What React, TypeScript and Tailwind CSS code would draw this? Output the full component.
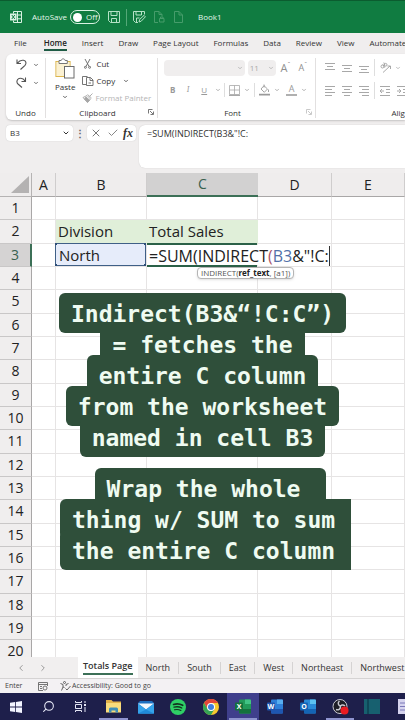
import type { ReactNode } from 'react';
import { ChevronDown, ChevronLeft, ChevronRight, Check, X, Search } from 'lucide-react';

const MENU = ['File', 'Home', 'Insert', 'Draw', 'Page Layout', 'Formulas', 'Data', 'Review', 'View', 'Automate'];
const COLUMNS = ['A', 'B', 'C', 'D', 'E'];
const ROWS = Array.from({ length: 20 }, (_, i) => i + 1);
const SHEETS = ['North', 'South', 'East', 'West', 'Northeast', 'Northwest'];

function Chevron({ label, className = '' }: { label: string; className?: string }) {
  return (
    <button aria-label={label} className={`shrink-0 ${className}`}>
      <ChevronDown size={6} strokeWidth={3} />
    </button>
  );
}

/* ---------- title bar ---------- */

function TitleBar() {
  return (
    <header className="flex h-[33px] shrink-0 items-center border-t border-[#0b5c2f] bg-[#107c41] pl-[10px] text-[8px] text-[#e3f6ea]">
      <svg width="12" height="12" viewBox="0 0 12 12" fill="none" stroke="#d9f2e2" strokeWidth="1">
        <path d="M3.5 2.5v-2h8v11h-8v-2M7.5.5v11M7 4h4.5M7 7.8h4.5" />
        <rect x="0" y="2.5" width="6.6" height="7" fill="#d9f2e2" stroke="none" />
        <path d="M1.8 4l3 4M4.8 4l-3 4" stroke="#107c41" />
      </svg>
      <span className="ml-[10px] w-[38px]">AutoSave</span>
      <button className="flex h-[14px] w-[30px] items-center gap-1 rounded-full border border-[#d9f2e2] pl-[2px]">
        <span className="h-[9px] w-[9px] rounded-full bg-white" />
        Off
      </button>
      <button aria-label="Save" className="ml-[8px]">
        <svg width="12" height="12" viewBox="0 0 12 12" fill="none" stroke="#b5e2c6">
          <path d="M.5.5h11v11h-9l-2-2zM3 .5v4h6v-4M3.5 11.5v-4h5v4" />
        </svg>
      </button>
      <span className="mx-[6px] h-[17px] w-px bg-[#54a878]" />
      <button aria-label="Save as">
        <svg width="13" height="12" viewBox="0 0 13 12" fill="none" stroke="#b5e2c6">
          <path d="M5 11.5H2.500l-2-2v-9h11v3M3 .5v3.500h5.500v-3.500M3.500 11V7h3M6 11l.7-2.600 4.300-4 1.400 1.400-4.200 4.400z" />
        </svg>
      </button>
      <button aria-label="Protect" className="ml-[8px]">
        <svg width="11" height="12" viewBox="0 0 11 12" fill="none" stroke="#469c6b">
          <path d="M4 11.500H.5V.5H5l3 3V5M5 .5v3h3M5.500 7.500h4.500v3.500H5.500zM6.500 7.500V6h2.500v1.500" />
        </svg>
      </button>
      <button aria-label="New" className="ml-[9px]">
        <svg width="9" height="12" viewBox="0 0 9 12" fill="none" stroke="#469c6b">
          <path d="M.5.5H5l3.500 3.500v7.500h-8zM5 .5V4h3.500" />
        </svg>
      </button>
      <span className="ml-[15px]">Book1</span>
    </header>
  );
}

function MenuTabs() {
  return (
    <nav className="flex h-[21px] shrink-0 items-center gap-[15px] overflow-hidden pl-[14px] text-[8px] whitespace-nowrap text-[#333]">
      {MENU.map(name => (
        <button
          key={name}
          className={
            name === 'Home'
              ? 'ml-[2px] border-b-2 border-[#1e5b45] font-semibold text-[#222]'
              : 'border-b-2 border-transparent'
          }
        >
          {name}
        </button>
      ))}
    </nav>
  );
}

/* ---------- ribbon ---------- */

function Group({ label, className, children }: { label: string; className: string; children: ReactNode }) {
  return (
    <section className={`relative flex shrink-0 flex-col border-r border-[#e2e0e0] ${className}`}>
      <div className="h-[50px]">{children}</div>
      <h2 className="text-center text-[8px] leading-[10px] text-[#333]">{label}</h2>
    </section>
  );
}

function Launcher({ color }: { color: string }) {
  return (
    <button aria-label="More settings" className="absolute right-[3px] bottom-[3px]">
      <svg width="6" height="6" viewBox="0 0 6 6" fill="none" stroke={color} strokeWidth=".8">
        <path d="M.5 4.500v-4h4M2 2l3 3M5.500 2.500v3h-3" />
      </svg>
    </button>
  );
}

function Lines({ d, label }: { d: string; label: string }) {
  return (
    <button aria-label={label}>
      <svg width="10" height="11" viewBox="0 0 10 11" fill="none" stroke="#a8a8a8">
        <path d={d} />
      </svg>
    </button>
  );
}

function Ribbon() {
  return (
    <div className="ml-[6px] flex h-[66px] shrink-0 overflow-hidden rounded-l-md bg-white pt-[4px] pb-[2px] shadow-[0_1px_2px_#c4c2c2]">
      <Group label="Undo" className="w-[40px]">
        <div className="flex flex-col gap-[7px] pt-[1px] pl-[10px] text-[#444]">
          <div className="flex items-center gap-[6px]">
            <button aria-label="Undo">
              <svg width="11" height="11" viewBox="0 0 11 11" fill="none" stroke="#555" strokeWidth="1.100">
                <path d="M1 .5v4h4M1.200 4.300C3 2 5 .8 7.500 1.300c2.500.6 3.300 3 1.500 5L4.500 10.500" />
              </svg>
            </button>
            <Chevron label="Undo list" />
          </div>
          <div className="flex items-center gap-[6px]">
            <button aria-label="Redo">
              <svg width="11" height="11" viewBox="0 0 11 11" fill="none" stroke="#555" strokeWidth="1.100">
                <path d="M9.500.5v4h-4M9.300 4.300C7.500 1.500 5 .8 3 1.600.5 2.700.4 5.500 2 7l4 3.500" />
              </svg>
            </button>
            <Chevron label="Redo list" />
          </div>
        </div>
      </Group>

      <Group label="Clipboard" className="w-[112px] pr-[8px]">
        <div className="flex gap-[7px] pl-[9px] text-[8px] leading-[10px] text-[#333]">
          <button className="flex w-[24px] flex-col items-center">
            <svg width="20" height="21" viewBox="0 0 20 21" fill="none">
              <path d="M1 3.500h14v5M1 3v15.500h9" stroke="#dcb64e" strokeWidth="1.200" />
              <path d="M1.600 4h12.800v5H9.500v9H1.600z" fill="#fbf1d2" />
              <path d="M4 5.500v-3h2.200C6.500.3 9.800.3 10.100 2.500h2.200v3z" fill="#fff" stroke="#777" />
              <rect x="9.500" y="8.500" width="9.500" height="11.500" fill="#fff" stroke="#6b6b6b" />
            </svg>
            <span className="pt-[3px]">Paste</span>
            <ChevronDown size={6} strokeWidth={3} className="mt-[2px]" />
          </button>
          <div className="flex flex-col gap-[7px] pt-px whitespace-nowrap">
            <button className="flex items-center gap-[5px] pl-[2px]">
              <svg width="7" height="10" viewBox="0 0 7 10" fill="none" stroke="#666" strokeWidth=".9">
                <path d="M1 0l4 7.500M6 0L2 7.500" />
                <circle cx="1.400" cy="8.300" r="1" />
                <circle cx="5.600" cy="8.300" r="1" />
              </svg>
              Cut
            </button>
            <div className="flex items-center gap-[8px]">
              <button className="flex items-center gap-[2px]">
                <svg width="12" height="10" viewBox="0 0 12 10" fill="none" stroke="#666" strokeWidth=".9">
                  <path d="M4 8.500H.5v-8h5M4.500 1.500h4l2.500 2.500v5.500H4.500zM8 1.500v3h3M6.500 7h2.500" />
                </svg>
                Copy
              </button>
              <Chevron label="Copy list" />
            </div>
            <button disabled className="flex items-center gap-[2px] text-[#b5b5b5]">
              <svg width="11" height="10" viewBox="0 0 11 10" fill="none" stroke="#a5a5a5" strokeWidth=".9">
                <path d="M10.500.5L7.500 3.500M5.500 1.500l4 3.500M5 2.500L1 4.500l4.500 5 3-3.500z" />
                <path d="M2.500 6l3 3.300 2-2.300L4 4z" fill="#a5a5a5" />
              </svg>
              Format Painter
            </button>
          </div>
        </div>
        <Launcher color="#555" />
      </Group>

      <Group label="Font" className="w-[158px] pr-[8px]">
        <div className="flex h-[19px] items-center pl-[6px] text-[#aaa]">
          <div className="mt-px flex h-[16px] w-[81px] items-center justify-end rounded-sm bg-[#f0eeee] pr-[2px]">
            <Chevron label="Font name" />
          </div>
          <div className="mt-px ml-[3px] flex h-[16px] w-[28px] items-center justify-between rounded-sm bg-[#f0eeee] px-[2px] text-[8px]">
            11
            <Chevron label="Font size" />
          </div>
          <button className="ml-[5px] flex text-[11px] leading-[14px] text-[#8f8f8f]">
            A<span className="text-[7px] leading-[7px]">ˆ</span>
          </button>
          <button className="ml-[8px] flex text-[9px] leading-[14px] text-[#8f8f8f]">
            A<span className="text-[7px] leading-[7px]">ˇ</span>
          </button>
        </div>
        <div className="mt-[6px] flex h-[14px] items-center pl-[12px] text-[8px] text-[#999]">
          <button className="w-[17px] text-left font-bold">B</button>
          <button className="w-[15px] text-left font-serif italic">I</button>
          <button className="w-[14px] text-left underline">U</button>
          <Chevron label="Underline style" className="w-[9px]" />
          <span className="h-[14px] w-px bg-[#dedede]" />
          <button aria-label="Borders" className="ml-[4px] w-[15px]">
            <svg width="11" height="11" viewBox="0 0 11 11" fill="none" stroke="#a8a8a8" strokeWidth=".8">
              <path d="M.5.500h10v9H.5zM5.500.5v9M.5 5h10" />
              <path d="M0 10.300h11" strokeWidth="1.300" />
            </svg>
          </button>
          <Chevron label="Border style" className="w-[10px]" />
          <span className="h-[14px] w-px bg-[#dedede]" />
          <button aria-label="Fill color" className="ml-[4px] w-[16px]">
            <svg width="11" height="12" viewBox="0 0 11 12" fill="none" stroke="#9a9a9a" strokeWidth=".9">
              <path d="M5 .5v3M2 5l3-3.300L8.500 5 5.300 8.300zM9.500 5.500v2.500" />
              <path d="M0 10.700h11" strokeWidth="1.800" />
            </svg>
          </button>
          <Chevron label="Fill colors" className="w-[12px]" />
          <button className="w-[11px] border-b-2 border-[#b0b0b0] text-center text-[9px] leading-[10px]">A</button>
          <Chevron label="Font colors" className="ml-[4px]" />
        </div>
        <Launcher color="#bbb" />
      </Group>

      <Group label="Alignment" className="w-[190px]">
        <div className="flex h-[19px] items-center gap-[7px] pl-[9px] text-[#aaa]">
          <Lines label="Top align" d="M0 1.500h10M2 4.500h6M0 7.500h10" />
          <Lines label="Middle align" d="M0 3.500h10M2 6.500h6M0 9.500h10" />
          <Lines label="Bottom align" d="M0 4.500h10M2 7.500h6M0 10.500h10" />
          <span className="-mx-[2px] h-[17px] w-px bg-[#dedede]" />
          <button aria-label="Orientation">
            <svg width="12" height="11" viewBox="0 0 12 11" fill="none" stroke="#a0a0a0" strokeWidth=".9">
              <path d="M3 10.500l7-6.500M7.500 4h3v3" />
              <circle cx="2.500" cy="4.500" r="1.500" />
              <circle cx="5.600" cy="2.800" r="1.400" />
              <path d="M2.800 2.500l2 3.200M3.800.5L5 3.500" />
            </svg>
          </button>
          <Chevron label="Orientation list" className="-ml-[4px]" />
        </div>
        <div className="mt-[6px] flex h-[14px] items-center gap-[7px] pl-[9px]">
          <Lines label="Align left" d="M0 1.500h10M0 4.500h7M0 7.500h10M0 10.500h7" />
          <Lines label="Center" d="M0 1.500h10M2 4.500h6M0 7.500h10M2 10.500h6" />
          <Lines label="Align right" d="M0 1.500h10M3 4.500h7M0 7.500h10M3 10.500h7" />
          <span className="-mx-[2px] h-[17px] w-px bg-[#dedede]" />
          <Lines label="Decrease indent" d="M0 1.500h10M6 4.500h4M6 7.500h4M0 10.500h10M0 6h4M2 4L0 6l2 2" />
          <Lines label="Increase indent" d="M0 1.500h10M6 4.500h4M6 7.500h4M0 10.500h10M0 6h4M2 4l2 2-2 2" />
        </div>
      </Group>
    </div>
  );
}

/* ---------- formula bar ---------- */

function FormulaBar() {
  return (
    <div className="mt-[5px] flex h-[43px] shrink-0 items-start pl-[6px] text-[8px] text-[#333]">
      <div className="flex h-[16px] w-[67px] items-center rounded-sm bg-white pr-[3px] pl-[4px] shadow-[0_0_1px_#bbb]">
        <input aria-label="Name box" defaultValue="B3" className="min-w-0 flex-1 outline-none" />
        <button aria-label="Names">
          <ChevronDown size={8} strokeWidth={3} />
        </button>
      </div>
      <span className="w-[14px] text-center text-[10px] leading-[16px] font-bold text-[#666]">⋮</span>
      <div className="flex h-[16px] w-[49px] items-center justify-between rounded-sm bg-white px-[3px] shadow-[0_0_1px_#bbb]">
        <button aria-label="Cancel"><X size={12} strokeWidth={2} className="text-[#777]" /></button>
        <button aria-label="Enter"><Check size={12} strokeWidth={2} className="text-[#888]" /></button>
        <button className="font-['Liberation_Serif',serif] text-[12px] leading-[14px] font-bold italic">fx</button>
      </div>
      <textarea
        aria-label="Formula"
        defaultValue={'=SUM(INDIRECT(B3&"!C:'}
        className="ml-[3px] h-full flex-1 resize-none rounded-l-md bg-white px-[8px] pt-[3px] text-[9px] leading-[12px] shadow-[0_0_1px_#bbb] outline-none"
      />
    </div>
  );
}

/* ---------- worksheet ---------- */

function cellContent(row: number, col: string) {
  if (row === 2 && col === 'B') return 'Division';
  if (row === 2 && col === 'C') return 'Total Sales';
  if (row === 3 && col === 'B') {
    return (
      <div className="absolute -top-px -left-px right-0 bottom-0 border border-[#3f5f86] bg-[#e6ecfa] pl-[3px]">
        North
        <i className="absolute -top-[1px] -left-[1px] h-[2px] w-[2px] bg-[#2f4f78]" />
        <i className="absolute -top-[1px] -right-[1px] h-[2px] w-[2px] bg-[#2f4f78]" />
        <i className="absolute -bottom-[1px] -left-[1px] h-[2px] w-[2px] bg-[#2f4f78]" />
        <i className="absolute -right-[1px] -bottom-[1px] h-[2px] w-[2px] bg-[#2f4f78]" />
      </div>
    );
  }
  if (row === 3 && col === 'C') {
    return (
      <>
        <div className="absolute -top-px -bottom-px left-0 w-full border-y-2 border-[#2b6148]" />
        <div className="absolute top-px bottom-px left-0 z-10 flex items-center bg-white pt-px pl-[2px] text-[16px] whitespace-nowrap">
          =SUM(INDIRECT<span className="text-[#a8566a]">(</span>
          <span className="text-[#5270a8]">B3</span>&amp;"!C:
          <span className="h-[20px] w-px bg-[#333]" />
        </div>
        <div className="absolute top-full left-[50px] z-10 mt-px rounded-sm border border-[#b5b5b5] bg-white px-[3px] text-[8px] leading-[10px] whitespace-nowrap text-[#555] shadow-sm">
          INDIRECT(<b className="text-[#222]">ref_text</b>, [a1])
        </div>
      </>
    );
  }
  return null;
}

function Worksheet() {
  return (
    <table className="w-full table-fixed border-separate border-spacing-0 text-[15px] leading-[22px] text-[#222]">
      <colgroup>
        <col className="w-[32px]" />
        <col className="w-[24px]" />
        <col className="w-[91px]" />
        <col className="w-[111px]" />
        <col className="w-[74px]" />
        <col />
      </colgroup>
      <thead>
        <tr className="h-[24px] bg-[#efeded] text-[14px]">
          <th className="border-r border-b border-[#b5b3b3] p-0">
            <svg width="18" height="17" viewBox="0 0 18 17" className="mr-[2px] ml-auto">
              <path d="M18 0v17H0z" fill="#b4b2b2" />
            </svg>
          </th>
          {COLUMNS.map(col => (
            <th
              key={col}
              className={
                col === 'C'
                  ? 'border-b-2 border-[#3c7057] bg-[#d2d1d1] p-0 font-normal text-[#39614f]'
                  : 'border-r border-b border-r-[#cfcdcd] border-b-[#a9a7a7] p-0 font-normal'
              }
            >
              {col}
            </th>
          ))}
        </tr>
      </thead>
      <tbody className="align-top">
        {ROWS.map(row => (
          <tr key={row} className={row % 3 === 2 ? 'h-[24px]' : 'h-[23px]'}>
            <th
              className={
                row === 3
                  ? 'border-r-2 border-b border-r-[#3c7057] border-b-[#c9c7c7] bg-[#d5d3d3] p-0 text-[14px] font-normal text-[#39614f]'
                  : 'border-r border-b border-r-[#a9a7a7] border-b-[#c9c7c7] bg-[#f0eeee] p-0 text-[14px] font-normal'
              }
            >
              {row}
            </th>
            {COLUMNS.map(col => (
              <td
                key={col}
                className={
                  row === 2 && (col === 'B' || col === 'C')
                    ? 'relative border-b border-[#dcebd6] bg-[#e0efd9] py-0 pr-0 pl-[2px]'
                    : 'relative border-r border-b border-[#e6e4e4] bg-white p-0'
                }
              >
                {cellContent(row, col)}
              </td>
            ))}
          </tr>
        ))}
      </tbody>
    </table>
  );
}

/* ---------- captions over the sheet ---------- */

function Caption({ lines }: { lines: string[] }) {
  return (
    <div className="flex w-max flex-col items-center font-['DejaVu_Sans_Mono',monospace] text-[23px] leading-[38px] font-bold whitespace-pre text-[#effbf1]">
      {lines.map(line => (
        <p key={line} className="-mb-[9px] rounded-md bg-[#2f4f3a] px-[12px] pt-[2px]">
          <span className="relative z-10">{line}</span>
        </p>
      ))}
    </div>
  );
}

/* ---------- bottom bars ---------- */

function SheetTabs() {
  return (
    <div className="flex h-[22px] shrink-0 items-center overflow-hidden border-b border-[#d5d3d3] bg-[#f1efef] pl-[16px] text-[9px] whitespace-nowrap text-[#333]">
      <button aria-label="Previous sheet"><ChevronLeft size={10} className="text-[#888]" /></button>
      <button aria-label="Next sheet" className="ml-[12px]"><ChevronRight size={10} className="text-[#888]" /></button>
      <button className="ml-[30px] h-full bg-white px-[5px] pb-[2px] font-semibold">
        <span className="block border-b-2 border-[#3c7057] leading-[14px]">Totals Page</span>
      </button>
      {SHEETS.map(name => (
        <button key={name} className="border-r border-[#d5d3d3] px-[8px] leading-[12px]">{name}</button>
      ))}
    </div>
  );
}

function StatusBar() {
  return (
    <div className="flex h-[14px] shrink-0 items-center bg-[#f3f1f3] pl-[5px] text-[7px] text-[#444]">
      <span className="w-[33px]">Enter</span>
      <svg width="10" height="9" viewBox="0 0 10 9" fill="none" stroke="#666" strokeWidth=".9">
        <path d="M5 8.500H.5v-8h9V4M.5 2.500h9M2 4.500h2M2 6.500h2" />
        <circle cx="7" cy="6" r="2" />
      </svg>
      <svg width="11" height="10" viewBox="0 0 11 10" fill="none" stroke="#555" strokeWidth=".9" className="ml-[12px]">
        <circle cx="4.500" cy="1.500" r="1" />
        <path d="M.5 2.500l2.500 1v2.500L1.500 9.500M8.500 2.500L6 3.500V5M3 6l1.500.5M5.500 7.500l1.500 1.500L10.500 5" />
      </svg>
      <span className="ml-px">Accessibility: Good to go</span>
    </div>
  );
}

function OfficeIcon({ letter, dark, mid, light }: { letter: string; dark: string; mid: string; light: string }) {
  return (
    <svg width="16" height="15" viewBox="0 0 16 15">
      <rect x="4" y="0.500" width="12" height="14" rx="1" fill={mid} />
      <path d="M10 .5h5a1 1 0 0 1 1 1V5h-6z" fill={light} />
      <path d="M4 10h12v3.500a1 1 0 0 1-1 1H5a1 1 0 0 1-1-1z" fill={dark} />
      <rect x="0" y="3.500" width="8" height="8" rx="1" fill={dark} />
      <text x="4" y="10" textAnchor="middle" fontSize="7" fontWeight="700" fill="#fff">{letter}</text>
    </svg>
  );
}

function TaskButton({ label, className = '', running, children }: { label: string; className?: string; running?: boolean; children: ReactNode }) {
  return (
    <button aria-label={label} className={`relative flex h-full w-[8%] shrink-0 items-center justify-center ${className}`}>
      {children}
      {running && <i className="absolute inset-x-[2px] bottom-0 h-[2px] bg-[#8f94cf]" />}
    </button>
  );
}

function Taskbar() {
  return (
    <footer className="flex h-[27px] shrink-0 overflow-hidden bg-[#1e1f4b]">
      <TaskButton label="Start">
        <svg width="12" height="12" viewBox="0 0 12 12" fill="#f2f4ff">
          <path d="M0 1.700L5.200 1v4.600H0zM6 .9L12 0v5.600H6zM0 6.400h5.200V11L0 10.300zM6 6.400h6V12l-6-.9z" />
        </svg>
      </TaskButton>
      <TaskButton label="Search">
        <Search size={13} strokeWidth={2} className="-scale-x-100 text-[#e4e6f5]" />
      </TaskButton>
      <TaskButton label="Task view">
        <svg width="12" height="11" viewBox="0 0 12 11" fill="none" stroke="#e4e6f5">
          <path d="M.5 0v1.500h6V0M.5 3.500h6v4h-6zM.5 11V9.500h6V11M10 0v2M10 6v5" />
          <rect x="9" y="3" width="2" height="2" fill="#e4e6f5" stroke="none" />
        </svg>
      </TaskButton>
      <TaskButton label="File Explorer" running>
        <svg width="15" height="13" viewBox="0 0 15 13">
          <path d="M0 0h5.500l1.500 1.500h8V12H0z" fill="#e2b24a" />
          <path d="M0 3h15v9.500H0z" fill="#f8dc7c" />
          <path d="M3 12.500V9a1.500 1.500 0 0 1 1.500-1.500h6A1.500 1.500 0 0 1 12 9v3.500H9.500V10.500h-4v2z" fill="#3f8fb8" />
        </svg>
      </TaskButton>
      <TaskButton label="Mail">
        <svg width="16" height="15" viewBox="0 0 16 15">
          <path d="M0 4l2-2h12l2 2v10.500H0z" fill="#1d6fc0" />
          <path d="M0 4.500h16L8 10.500z" fill="#f2f7fc" />
          <path d="M0 4.500l8 6 8-6v10H0z" fill="#36a3ea" />
          <path d="M0 14.500l8-4 8 4z" fill="#2089d8" />
        </svg>
      </TaskButton>
      <TaskButton label="Spotify">
        <svg width="16" height="16" viewBox="0 0 16 16" fill="none" stroke="#12331f" strokeLinecap="round">
          <circle cx="8" cy="8" r="8" fill="#2fcf66" stroke="none" />
          <path d="M3.500 5.500c3-1 6.500-.7 9.200.8" strokeWidth="1.600" />
          <path d="M4 8.200c2.600-.8 5.400-.5 7.800.8" strokeWidth="1.300" />
          <path d="M4.500 10.800c2.200-.6 4.500-.4 6.400.7" strokeWidth="1.100" />
        </svg>
      </TaskButton>
      <TaskButton label="Chrome">
        <svg width="16" height="16" viewBox="0 0 16 16">
          <circle cx="8" cy="8" r="8" fill="#f7c92f" />
          <path d="M1.070 4A8 8 0 0 1 14.930 4H8L4.540 10z" fill="#e2463b" />
          <path d="M1.070 4A8 8 0 0 0 8 16l3.460-6H4.540z" fill="#36a456" />
          <circle cx="8" cy="8" r="4" fill="#fff" />
          <circle cx="8" cy="8" r="3" fill="#3f7fe0" />
        </svg>
      </TaskButton>
      <TaskButton label="Excel" running className="bg-[#3f3f8c]">
        <OfficeIcon letter="X" dark="#14713d" mid="#229a58" light="#41c383" />
      </TaskButton>
      <TaskButton label="Word">
        <OfficeIcon letter="W" dark="#1e56b0" mid="#2f7fd8" light="#58aef0" />
      </TaskButton>
      <TaskButton label="Outlook">
        <OfficeIcon letter="O" dark="#1464b4" mid="#2a8bd8" light="#5cc2f2" />
      </TaskButton>
      <TaskButton label="OBS" running>
        <svg width="17" height="16" viewBox="0 0 17 16">
          <circle cx="8" cy="7.500" r="7" fill="#1d1d26" stroke="#c9c9d2" />
          <path d="M7.500 2c-2 1.500-1.500 4.500 1 5M13 7c-2-2-4.500-1-5 1M4 10.500c2.500 1 4.500-.5 4.500-3" stroke="#c9c9d2" strokeWidth="1.500" fill="none" />
          <circle cx="12.500" cy="11.500" r="4" fill="#ea1b22" />
        </svg>
      </TaskButton>
      <TaskButton label="Library">
        <svg width="16" height="15" viewBox="0 0 16 15">
          <rect width="16" height="15" fill="#17606f" />
          <path d="M4 0v15" stroke="#0e3f50" strokeWidth="1.500" />
        </svg>
      </TaskButton>
      <TaskButton label="Notes">
        <svg width="13" height="15" viewBox="0 0 13 15">
          <rect width="13" height="15" fill="#d5d3ee" />
          <path d="M2 4h9M2 7.500h9M2 11h9" stroke="#7b78b8" />
        </svg>
      </TaskButton>
    </footer>
  );
}

export default function App() {
  return (
    <div className="flex h-screen flex-col overflow-hidden bg-[#f0eeee] font-['Open_Sans','Noto_Sans',sans-serif]">
      <TitleBar />
      <MenuTabs />
      <Ribbon />
      <FormulaBar />
      <main className="relative mt-[5px] min-h-0 flex-1 overflow-hidden">
        <Worksheet />
        <div className="absolute inset-x-0 top-[120px] z-20 flex justify-center">
          <Caption lines={['Indirect(B3&“!C:C”)', '= fetches the', 'entire C column', 'from the worksheet', 'named in cell B3']} />
        </div>
        <div className="absolute top-[295px] right-[54px] left-[60px] z-20 overflow-hidden pb-[9px]">
          <Caption lines={['Wrap the whole ', 'thing w/ SUM to sum ', 'the entire C column ']} />
        </div>
      </main>
      <SheetTabs />
      <StatusBar />
      <Taskbar />
    </div>
  );
}
